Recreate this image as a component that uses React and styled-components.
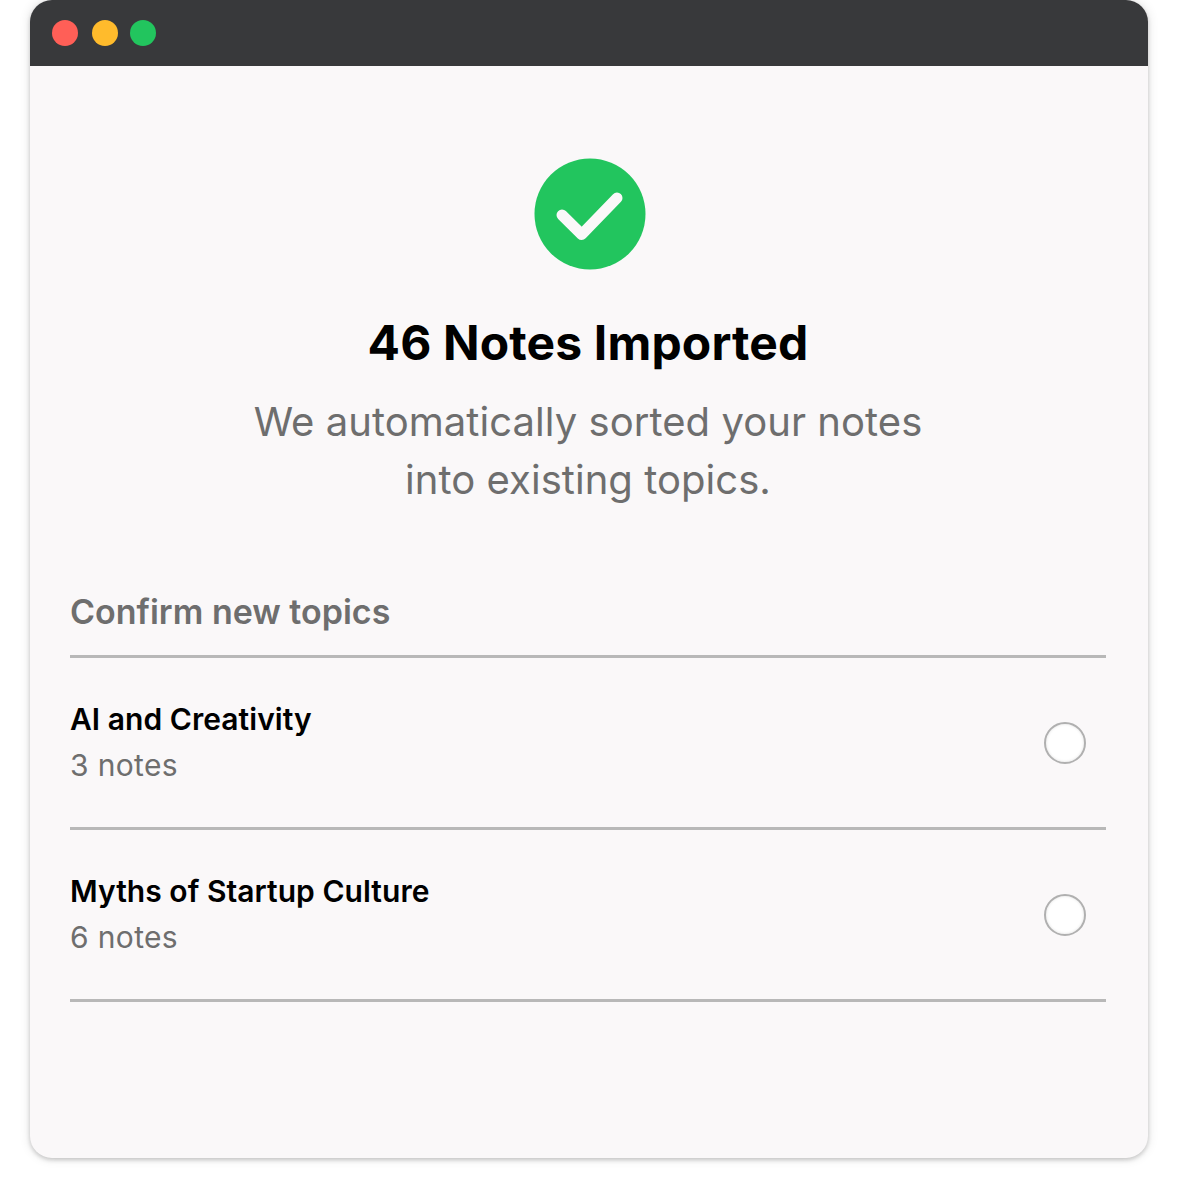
import React from "react";
import styled, { createGlobalStyle } from "styled-components";

const GlobalStyle = createGlobalStyle`
  html, body {
    margin: 0;
    background: #fff;
    font-family: Inter, "Liberation Sans", sans-serif;
  }
`;

const topics = [
  { name: "AI and Creativity", count: "3 notes" },
  { name: "Myths of Startup Culture", count: "6 notes" },
];

export default function App() {
  return (
    <>
      <GlobalStyle />
      <Page>
        <Window>
          <TitleBar>
            <Dot $color="#ff5f57" />
            <Dot $color="#ffbb2c" $gap="14px" />
            <Dot $color="#22c55e" $gap="12px" />
          </TitleBar>
          <Content>
            <CheckIcon viewBox="0 0 112 112">
              <circle cx="56" cy="56" r="55.5" fill="#22c55e" />
              <path
                d="M28 57 L47.7 76.5 L83 40"
                fill="none"
                stroke="#faf8f9"
                strokeWidth="11"
                strokeLinecap="round"
                strokeLinejoin="round"
              />
            </CheckIcon>
            <Title>46 Notes Imported</Title>
            <Subtitle>
              We automatically sorted your notes
              <br />
              into existing topics.
            </Subtitle>
            <TopicSection>
              <SectionHeading>Confirm new topics</SectionHeading>
              {topics.map((topic) => (
                <TopicRow key={topic.name}>
                  <TopicText>
                    <TopicName>{topic.name}</TopicName>
                    <TopicCount>{topic.count}</TopicCount>
                  </TopicText>
                  <Radio />
                </TopicRow>
              ))}
            </TopicSection>
          </Content>
        </Window>
      </Page>
    </>
  );
}

const Page = styled.div`
  width: 1178px;
  height: 1178px;
  box-sizing: border-box;
  padding: 0 30px;
  overflow: hidden;
`;

const Window = styled.div`
  height: 1158px;
  border-radius: 22px;
  overflow: hidden;
  background: #faf8f9;
  box-shadow: 0 2px 4px rgba(0, 0, 0, 0.18), 0 0 12px rgba(0, 0, 0, 0.12);
`;

const TitleBar = styled.div`
  height: 66px;
  background: #38393b;
  display: flex;
  align-items: center;
  padding-left: 22px;
`;

const Dot = styled.span`
  width: 26px;
  height: 26px;
  border-radius: 50%;
  background: ${(p) => p.$color};
  margin-left: ${(p) => p.$gap || 0};
`;

const Content = styled.div`
  display: flex;
  flex-direction: column;
  align-items: center;
  padding: 92px 42px 0 40px;
`;

const CheckIcon = styled.svg`
  width: 112px;
  height: 112px;
  display: block;
  margin-left: 4px;
`;

const Title = styled.h1`
  margin: 44px 0 0;
  font-size: 48px;
  line-height: 58px;
  letter-spacing: 0.15px;
  font-weight: 700;
  color: #000;
`;

const Subtitle = styled.p`
  margin: 21px 0 0;
  font-size: 40px;
  line-height: 58px;
  letter-spacing: 0.05px;
  font-weight: 400;
  color: #6e6e6e;
  text-align: center;
`;

const TopicSection = styled.section`
  width: 100%;
  margin-top: 82px;
`;

const SectionHeading = styled.h2`
  margin: 0;
  height: 67px;
  box-sizing: border-box;
  border-bottom: 3px solid #b8b8b8;
  font-size: 34px;
  line-height: 42px;
  font-weight: 600;
  color: #6e6e6e;
`;

const TopicRow = styled.div`
  height: 172px;
  box-sizing: border-box;
  border-bottom: 3px solid #b8b8b8;
  display: flex;
  align-items: center;
  justify-content: space-between;
  padding-right: 20px;
`;

const TopicText = styled.div`
  padding-bottom: 2px;
`;

const TopicName = styled.div`
  font-size: 30px;
  line-height: 38px;
  letter-spacing: 0.04px;
  font-weight: 600;
  color: #000;
`;

const TopicCount = styled.div`
  margin-top: 8px;
  font-size: 30px;
  line-height: 38px;
  letter-spacing: 0.35px;
  color: #6e6e6e;
`;

const Radio = styled.span`
  width: 42px;
  height: 42px;
  box-sizing: border-box;
  border-radius: 50%;
  border: 2px solid #b0b0b0;
  background: #fff;
  box-shadow: inset 0 0 3px rgba(0, 0, 0, 0.12);
`;
